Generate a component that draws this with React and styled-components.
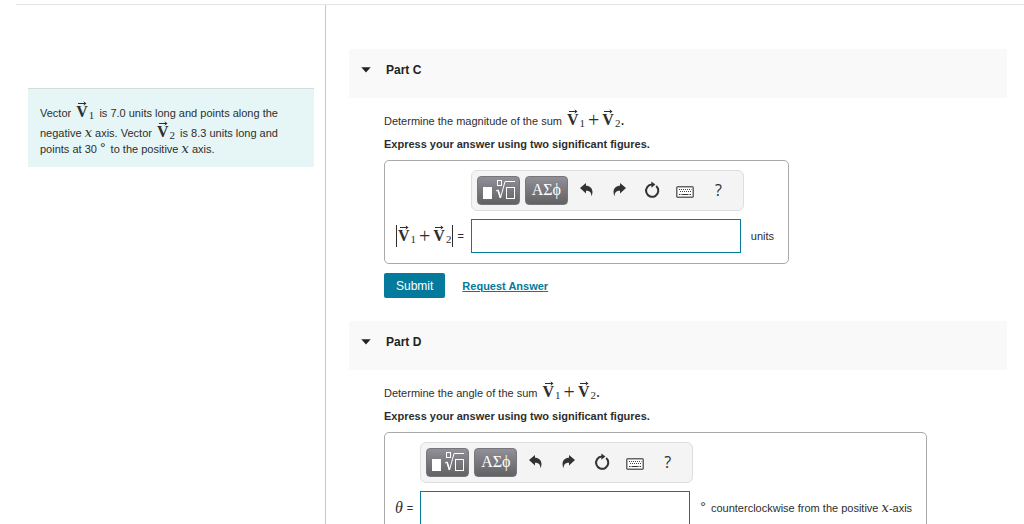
import React from 'react';
import styled, { createGlobalStyle } from 'styled-components';

const color = {
  text: '#2e2e2e',
  teal: '#047a9c',
  border: '#a9a9a9',
  divider: '#b9c9d8',
  rule: '#e4e4e4',
};

const GlobalStyle = createGlobalStyle`
  *, *::before, *::after {
    box-sizing: border-box;
  }

  body {
    margin: 0;
    background: #fff;
    color: ${color.text};
    font: 11px/16px 'Liberation Sans', Arial, sans-serif;
  }

  p, h2 {
    margin: 0;
  }

  button, input {
    font: inherit;
    color: inherit;
  }
`;

const Page = styled.div`
  display: flex;
  flex-direction: column;
  height: 100vh;
  padding-top: 4px;
`;

const Columns = styled.div`
  display: flex;
  flex: 1;
  min-height: 0;
  margin-left: 16px;
  border-top: 1px solid ${color.rule};
`;

const Sidebar = styled.aside`
  flex: 0 0 310px;
  padding: 83px 11px 0 12px;
  border-right: 1px solid ${color.divider};
`;

const Problem = styled.p`
  padding: 12px 12px 10px;
  border-top: 1px solid #d5dcdc;
  background: #e6f6f6;
`;

const Main = styled.main`
  flex: 1;
  min-width: 0;
  padding: 44px 17px 0 23px;
  overflow-y: auto;
  scrollbar-width: none;
`;

const PartSection = styled.section`
  margin-bottom: 23px;
`;

const PartHeader = styled.h2`
  height: 49px;
  background: #f9f9f9;
`;

const PartToggle = styled.button`
  display: flex;
  align-items: center;
  gap: 15px;
  padding: 12px;
  border: none;
  background: transparent;
  font-size: 12px;
  font-weight: bold;
  line-height: 18px;
  color: #222;
  cursor: pointer;
`;

const PartBody = styled.div`
  padding: 11px 0 0 35px;
`;

const Instruction = styled.p`
  margin: 7px 0 8px;
  font-weight: bold;
`;

const AnswerBox = styled.div`
  display: inline-grid;
  grid-template-columns: auto 273px auto;
  column-gap: 7px;
  row-gap: 8px;
  align-items: center;
  padding: 9px 14px 10px 10px;
  border: 1px solid ${color.border};
  border-radius: 5px;
  vertical-align: top;
`;

const Toolbar = styled.div`
  display: flex;
  grid-column: 2;
  align-items: center;
  height: 41px;
  padding: 0 5px;
  border: 1px solid #dedede;
  border-radius: 6px;
  background: #f4f4f4;
`;

const Palettes = styled.div`
  display: flex;
  gap: 5px;
  margin-right: 2px;
`;

const PaletteButton = styled.button`
  display: flex;
  align-items: center;
  justify-content: center;
  width: 43px;
  height: 29px;
  padding: 0 0 2px;
  border: 1px solid #77777b;
  border-radius: 4px;
  background: linear-gradient(#918f98, #626264);
  color: #fff;
  font: 16px/20px 'Liberation Serif', 'DejaVu Serif', serif;
  cursor: pointer;
`;

const ToolButton = styled.button`
  display: flex;
  align-items: center;
  justify-content: center;
  width: 33px;
  height: 29px;
  padding: 0 0 2px;
  border: none;
  background: transparent;
  font-family: 'Open Sans', sans-serif;
  font-size: 16px;
  cursor: pointer;
`;

const AnswerLabel = styled.label`
  display: flex;
  grid-column: 1;
  align-items: center;
  gap: 4px;
`;

const AnswerInput = styled.input`
  width: 270px;
  height: 34px;
  padding: 0 8px;
  border: 1px solid ${color.teal};
  border-radius: 0;
  background: #fff;
  font-size: 14px;

  &:focus {
    outline: none;
  }
`;

const Actions = styled.div`
  display: flex;
  align-items: center;
  gap: 17px;
  margin-top: 9px;
`;

const SubmitButton = styled.button`
  height: 25px;
  padding: 0 12px;
  border: none;
  border-radius: 2px;
  background: ${color.teal};
  color: #fff;
  font-size: 12px;
  cursor: pointer;
`;

const RequestLink = styled.a`
  color: ${color.teal};
  font-weight: bold;
`;

const MathText = styled.span`
  font-family: 'Liberation Serif', 'Times New Roman', serif;
  font-size: 16px;
  line-height: 0;
  white-space: nowrap;
`;

const Magnitude = styled(MathText)`
  height: 22px;
  margin-left: 1px;
  padding: 0 1px;
  border: solid ${color.text};
  border-width: 0 1px;
`;

const Italic = styled(MathText)`
  font-style: italic;
`;

const Variable = styled(Italic)`
  font-family: 'DejaVu Serif', serif;
  font-size: 13px;
`;

const Symbol = styled.span`
  display: inline-block;
  position: relative;
  padding-top: 3px;
  font-weight: bold;
  line-height: 16px;
`;

const Arrow = styled.svg`
  position: absolute;
  top: 0;
  left: 2px;
`;

const Subscript = styled.sub`
  margin-left: 1px;
  font-size: 11px;
  line-height: 0;
  vertical-align: -2px;
`;

const Plus = styled.span`
  margin: 0 3px;
  font-size: 20px;
  line-height: 0;
  vertical-align: -2px;
`;

const VectorTerm = styled(MathText)`
  margin: 0 2px;
`;

const Degree = styled.span`
  margin-right: 2px;
  font-size: 14px;
  line-height: 0;
`;

function Vector({ index }) {
  return (
    <>
      <Symbol>
        V
        <Arrow width="9" height="5" viewBox="0 0 9 5" aria-hidden="true">
          <path d="M0 2.5H7" stroke="currentColor" />
          <path d="M5.5 0.3L8.5 2.5L5.5 4.7L6.3 2.5Z" fill="currentColor" />
        </Arrow>
      </Symbol>
      <Subscript>{index}</Subscript>
    </>
  );
}

function VectorSum() {
  return (
    <>
      <Vector index={1} />
      <Plus>+</Plus>
      <Vector index={2} />
    </>
  );
}

function CaretIcon() {
  return (
    <svg width="10" height="6" viewBox="0 0 10 6" aria-hidden="true">
      <path d="M0.3 0.3H9.7L5 5.6Z" fill="#222" />
    </svg>
  );
}

function TemplatesIcon() {
  return (
    <svg width="33" height="21" viewBox="0 0 33 21" aria-hidden="true">
      <rect x="1" y="8" width="9" height="12" fill="#fff" />
      <g fill="none" stroke="#fff">
        <rect x="15.5" y="1.5" width="4" height="5" />
        <path d="M14 12L16 11L18.5 19L23 2.5H33" />
        <path d="M16 11L18.5 19" strokeWidth="1.5" />
        <rect x="24.5" y="8.5" width="8" height="11" />
      </g>
    </svg>
  );
}

function UndoIcon() {
  return (
    <svg width="13" height="14" viewBox="0 0 13 14" aria-hidden="true">
      <path
        d="M0 5L6 0V2.7C11 2.7 14.3 7 11.4 13.6C11.6 9.6 9.8 7.8 6 7.8V10.4Z"
        fill="#333"
      />
    </svg>
  );
}

function RedoIcon() {
  return (
    <svg width="13" height="14" viewBox="0 0 13 14" aria-hidden="true">
      <path
        d="M13 5L7 0V2.7C2 2.7 -1.3 7 1.6 13.6C1.4 9.6 3.2 7.8 7 7.8V10.4Z"
        fill="#333"
      />
    </svg>
  );
}

function ResetIcon() {
  return (
    <svg width="16" height="18" viewBox="0 0 16 18" aria-hidden="true">
      <path
        d="M12.2 5.1A6.1 6.1 0 1 1 8 3.6"
        fill="none"
        stroke="#333"
        strokeWidth="2"
      />
      <path d="M7.4 0.6L11.4 3.6L7.4 6.8Z" fill="#333" />
    </svg>
  );
}

function KeyboardIcon() {
  return (
    <svg width="18" height="17" viewBox="0 0 18 17" aria-hidden="true">
      <rect
        x="0.75"
        y="5.75"
        width="16.5"
        height="10.5"
        rx="1"
        fill="#fff"
        stroke="#666"
        strokeWidth="1.5"
      />
      <path
        d="M3 8.5H15.5M4 10.5H15.5"
        stroke="#444"
        strokeDasharray="1 1"
      />
      <path d="M3 13.5H4.5M5.5 13.5H12.5M13.5 13.5H15" stroke="#333" />
    </svg>
  );
}

function AnswerToolbar() {
  return (
    <Toolbar role="toolbar" aria-label="Equation tools">
      <Palettes>
        <PaletteButton type="button" aria-label="Templates">
          <TemplatesIcon />
        </PaletteButton>
        <PaletteButton type="button" aria-label="Symbols">
          ΑΣϕ
        </PaletteButton>
      </Palettes>
      <ToolButton type="button" aria-label="Undo">
        <UndoIcon />
      </ToolButton>
      <ToolButton type="button" aria-label="Redo">
        <RedoIcon />
      </ToolButton>
      <ToolButton type="button" aria-label="Reset">
        <ResetIcon />
      </ToolButton>
      <ToolButton type="button" aria-label="Keyboard shortcuts">
        <KeyboardIcon />
      </ToolButton>
      <ToolButton type="button" aria-label="Help">
        ?
      </ToolButton>
    </Toolbar>
  );
}

function Part({ id, title, question, label, unit, children }) {
  return (
    <PartSection>
      <PartHeader>
        <PartToggle type="button" aria-expanded="true">
          <CaretIcon />
          {title}
        </PartToggle>
      </PartHeader>
      <PartBody>
        <p>
          {question}{' '}
          <VectorTerm>
            <VectorSum />.
          </VectorTerm>
        </p>
        <Instruction>
          Express your answer using two significant figures.
        </Instruction>
        <AnswerBox>
          <AnswerToolbar />
          <AnswerLabel htmlFor={id}>{label} =</AnswerLabel>
          <AnswerInput id={id} type="text" autoComplete="off" />
          <span>{unit}</span>
        </AnswerBox>
        {children}
      </PartBody>
    </PartSection>
  );
}

export default function App() {
  return (
    <Page>
      <GlobalStyle />
      <Columns>
        <Sidebar>
          <Problem>
            Vector{' '}
            <VectorTerm>
              <Vector index={1} />
            </VectorTerm>{' '}
            is 7.0 units long and points along the negative{' '}
            <Variable>x</Variable> axis. Vector{' '}
            <VectorTerm>
              <Vector index={2} />
            </VectorTerm>{' '}
            is 8.3 units long and points at 30 <Degree>°</Degree> to the
            positive <Variable>x</Variable> axis.
          </Problem>
        </Sidebar>
        <Main>
          <Part
            id="part-c"
            title="Part C"
            question="Determine the magnitude of the sum"
            label={
              <Magnitude>
                <VectorSum />
              </Magnitude>
            }
            unit="units"
          >
            <Actions>
              <SubmitButton type="button">Submit</SubmitButton>
              <RequestLink href="#request">Request Answer</RequestLink>
            </Actions>
          </Part>
          <Part
            id="part-d"
            title="Part D"
            question="Determine the angle of the sum"
            label={<Italic>θ</Italic>}
            unit={
              <>
                <Degree>°</Degree> counterclockwise from the positive{' '}
                <Variable>x</Variable>-axis
              </>
            }
          />
        </Main>
      </Columns>
    </Page>
  );
}
